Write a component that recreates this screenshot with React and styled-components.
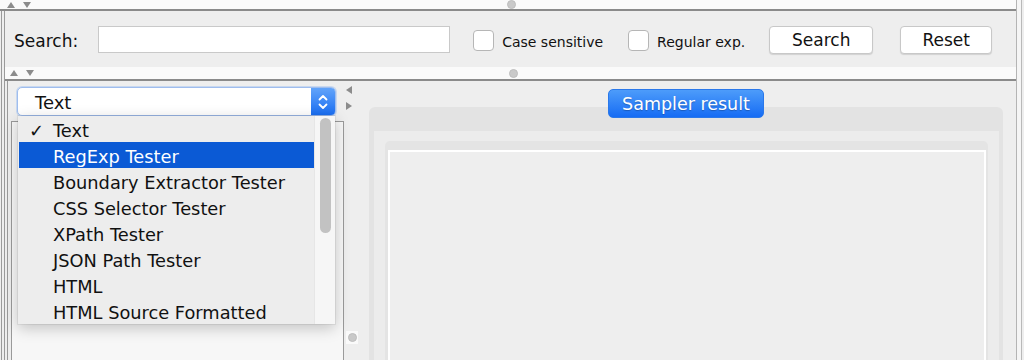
import styled, { createGlobalStyle } from "styled-components";

const GlobalStyle = createGlobalStyle`
  html, body {
    margin: 0;
    padding: 0;
    background: #eeeeee;
  }
  body {
    font-family: "DejaVu Sans", "Liberation Sans", sans-serif;
    color: #111;
  }
  #root {
    width: 1024px;
    height: 360px;
    overflow: hidden;
  }
`;

const Screen = styled.div`
  display: flex;
  width: 1024px;
  height: 360px;
  overflow: hidden;
`;

const Main = styled.div`
  width: 1016px;
  display: flex;
  flex-direction: column;
  border-right: 1px solid #b4b4b4;
`;

const Edge = styled.div`
  width: 4px;
  background: #f5f5f5;
  border-right: 1px solid #b9b9b9;
`;

const SplitBar = styled.div`
  height: ${(p) => p.$h}px;
  background: #fafafa;
  display: grid;
  grid-template-columns: 1fr auto 1fr;
  align-items: center;
  padding-left: ${(p) => p.$pad}px;
  border-bottom: 2px solid #8a8a8a;
`;

const Arrows = styled.div`
  display: flex;
  gap: ${(p) => p.$gap || 4}px;
  align-items: center;
`;

const Tri = styled.span`
  width: 0;
  height: 0;
  border-left: ${(p) => (p.$dir === "left" ? "none" : p.$dir === "right" ? "6px solid #8c8c8c" : "4px solid transparent")};
  border-right: ${(p) => (p.$dir === "right" ? "none" : p.$dir === "left" ? "6px solid #8c8c8c" : "4px solid transparent")};
  border-top: ${(p) => (p.$dir === "down" ? "6px solid #8c8c8c" : p.$dir === "up" ? "none" : "4px solid transparent")};
  border-bottom: ${(p) => (p.$dir === "up" ? "6px solid #8c8c8c" : p.$dir === "down" ? "none" : "4px solid transparent")};
`;

const Knob = styled.span`
  width: 7px;
  height: 7px;
  border-radius: 50%;
  background: #c9c9c9;
  border: 1px solid #bdbdbd;
`;

const Frame = styled.div`
  flex: 1;
  display: flex;
  flex-direction: column;
  margin-left: 1px;
  border-left: 4px double #9a9a9a;
  min-height: 0;
`;

const SearchRow = styled.div`
  height: 56px;
  display: flex;
  align-items: center;
  padding-left: 9px;
  padding-top: 1px;
  box-sizing: border-box;
`;

const Label = styled.span`
  font-size: 17px;
  margin-right: 20px;
  margin-top: 2px;
`;

const TextInput = styled.div`
  width: 350px;
  height: 25px;
  background: #fff;
  border: 1px solid #c9c9c9;
  margin-right: 23px;
`;

const CheckBox = styled.span`
  width: 19px;
  height: 19px;
  background: #fff;
  border: 1px solid #b6b6b6;
  border-radius: 4px;
  margin-right: 8px;
  margin-top: 2px;
`;

const CheckLabel = styled.span`
  font-size: 14px;
  margin-right: ${(p) => p.$gap}px;
  margin-top: 4px;
`;

const Button = styled.div`
  width: ${(p) => p.$w}px;
  height: 28px;
  box-sizing: border-box;
  background: #fff;
  border: 1px solid #c8c8c8;
  border-radius: 4px;
  box-shadow: 0 1px 1px rgba(0, 0, 0, 0.12);
  display: flex;
  align-items: center;
  justify-content: center;
  font-size: 17px;
  margin-right: ${(p) => p.$gap || 0}px;
`;

const Body = styled.div`
  flex: 1;
  display: flex;
  margin-left: 2px;
  border-left: 1px solid #9a9a9a;
  min-height: 0;
`;

const LeftPane = styled.div`
  width: 336px;
  display: flex;
  flex-direction: column;
  padding-top: 6px;
`;

const ComboWrap = styled.div`
  position: relative;
  margin-left: 9px;
  width: 319px;
  height: 29px;
  z-index: 2;
`;

const Combo = styled.div`
  height: 29px;
  box-sizing: border-box;
  display: flex;
  background: #fff;
  border: 1px solid #9fbdee;
  border-radius: 5px;
  box-shadow: 0 0 0 1px rgba(130, 175, 240, 0.35);
  overflow: hidden;
`;

const ComboText = styled.span`
  flex: 1;
  font-size: 18px;
  padding-left: 17px;
  line-height: 30px;
`;

const Stepper = styled.span`
  width: 24px;
  background: linear-gradient(#62a4fa, #1a6ef2);
  display: flex;
  align-items: center;
  justify-content: center;
`;

const Popup = styled.div`
  position: absolute;
  top: 29px;
  left: 1px;
  width: 317px;
  height: 208px;
  background: #ededed;
  box-shadow: 0 4px 14px rgba(0, 0, 0, 0.22), 0 0 0 1px rgba(0, 0, 0, 0.06);
  display: flex;
`;

const Items = styled.div`
  flex: 1;
  padding-left: 1px;
`;

const Item = styled.div`
  height: 26px;
  box-sizing: border-box;
  padding-top: 2px;
  display: flex;
  align-items: center;
  font-size: 17.8px;
  color: ${(p) => (p.$active ? "#fff" : "#111")};
  background: ${(p) => (p.$active ? "#0b5ad5" : "transparent")};
`;

const Check = styled.span`
  width: 34px;
  padding-left: 10px;
  box-sizing: border-box;
  font-size: 18px;
  font-weight: bold;
`;

const Track = styled.div`
  width: 21px;
  background: #f6f6f6;
  border-left: 1px solid #e6e6e6;
  padding: 2px 0 0 5px;
  box-sizing: border-box;
`;

const Thumb = styled.div`
  width: 11px;
  height: 115px;
  border-radius: 6px;
  background: #c2c2c2;
`;

const ListBox = styled.div`
  flex: 1;
  margin: 5px 0 0 3px;
  background: #f7f7f7;
  border: 1px solid #9a9a9a;
  border-bottom: none;
`;

const Divider = styled.div`
  width: 17px;
  display: flex;
  flex-direction: column;
  align-items: flex-start;
  padding: 5px 0 16px 2px;
  box-sizing: border-box;
`;

const DividerArrows = styled.div`
  display: flex;
  flex-direction: column;
  gap: 8px;
`;

const DotBox = styled.div`
  margin-top: auto;
  width: 12px;
  height: 13px;
  background: #fafafa;
  display: flex;
  align-items: center;
  justify-content: center;
`;

const RightPane = styled.div`
  flex: 1;
  display: flex;
  flex-direction: column;
  align-items: center;
  padding: 8px 13px 0 8px;
  min-width: 0;
`;

const TabButton = styled.div`
  position: relative;
  z-index: 1;
  width: 156px;
  height: 29px;
  box-sizing: border-box;
  border-radius: 5px;
  border: 1px solid #2a78ea;
  background: linear-gradient(#4d9cfa, #166cf4);
  color: #fff;
  font-size: 17.5px;
  display: flex;
  align-items: center;
  justify-content: center;
  text-shadow: 0 1px 1px rgba(0, 0, 0, 0.25);
`;

const TabPanel = styled.div`
  align-self: stretch;
  flex: 1;
  margin-top: -11px;
  background: #e3e3e3;
  border-radius: 6px 6px 0 0;
  padding: 24px 4px 0 5px;
  display: flex;
`;

const TabInner = styled.div`
  flex: 1;
  background: #ececec;
  padding: 10px 11px 0 11px;
  display: flex;
`;

const ResultBox = styled.div`
  flex: 1;
  background: #e4e4e4;
  border-radius: 5px 5px 0 0;
  padding: 9px 2px 0 3px;
  display: flex;
`;

const ResultArea = styled.div`
  flex: 1;
  background: #eeeeee;
  border: 2px solid #fff;
  border-bottom: none;
`;

const renderers = [
  "Text",
  "RegExp Tester",
  "Boundary Extractor Tester",
  "CSS Selector Tester",
  "XPath Tester",
  "JSON Path Tester",
  "HTML",
  "HTML Source Formatted",
];

function Chevrons() {
  return (
    <svg width="12" height="18" viewBox="0 0 12 18" fill="none" stroke="#fff" strokeWidth="1.8" strokeLinecap="round" strokeLinejoin="round">
      <path d="M2.5 6.5 L6 3 L9.5 6.5" />
      <path d="M2.5 11.5 L6 15 L9.5 11.5" />
    </svg>
  );
}

export default function App() {
  return (
    <>
      <GlobalStyle />
      <Screen>
        <Main>
          <SplitBar $h={9} $pad={7}>
            <Arrows $gap={8}>
              <Tri $dir="up" />
              <Tri $dir="down" />
            </Arrows>
            <Knob />
            <span />
          </SplitBar>
          <Frame>
            <SearchRow>
              <Label>Search:</Label>
              <TextInput />
              <CheckBox />
              <CheckLabel $gap={25}>Case sensitive</CheckLabel>
              <CheckBox />
              <CheckLabel $gap={24}>Regular exp.</CheckLabel>
              <Button $w={104} $gap={27}>Search</Button>
              <Button $w={92}>Reset</Button>
            </SearchRow>
            <SplitBar $h={12} $pad={5}>
              <Arrows $gap={8}>
                <Tri $dir="up" />
                <Tri $dir="down" />
              </Arrows>
              <Knob />
              <span />
            </SplitBar>
            <Body>
              <LeftPane>
                <ComboWrap>
                  <Combo>
                    <ComboText>Text</ComboText>
                    <Stepper>
                      <Chevrons />
                    </Stepper>
                  </Combo>
                  <Popup>
                    <Items>
                      {renderers.map((name, i) => (
                        <Item key={name} $active={i === 1}>
                          <Check>{i === 0 ? "✓" : ""}</Check>
                          {name}
                        </Item>
                      ))}
                    </Items>
                    <Track>
                      <Thumb />
                    </Track>
                  </Popup>
                </ComboWrap>
                <ListBox />
              </LeftPane>
              <Divider>
                <DividerArrows>
                  <Tri $dir="left" />
                  <Tri $dir="right" />
                </DividerArrows>
                <DotBox>
                  <Knob />
                </DotBox>
              </Divider>
              <RightPane>
                <TabButton>Sampler result</TabButton>
                <TabPanel>
                  <TabInner>
                    <ResultBox>
                      <ResultArea />
                    </ResultBox>
                  </TabInner>
                </TabPanel>
              </RightPane>
            </Body>
          </Frame>
        </Main>
        <Edge />
      </Screen>
    </>
  );
}
